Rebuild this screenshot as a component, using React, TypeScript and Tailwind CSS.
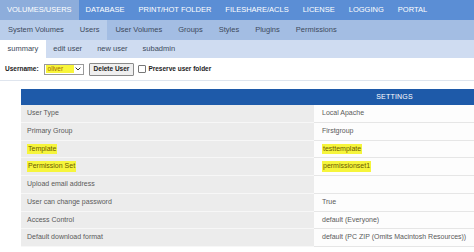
import React from "react";

const topNav = ["VOLUMES/USERS", "DATABASE", "PRINT/HOT FOLDER", "FILESHARE/ACLS", "LICENSE", "LOGGING", "PORTAL"];
const subNav = ["System Volumes", "Users", "User Volumes", "Groups", "Styles", "Plugins", "Permissions"];
const userTabs = ["summary", "edit user", "new user", "subadmin"];

const rows: { label: string; value: string; mark?: boolean }[] = [
  { label: "User Type", value: "Local Apache" },
  { label: "Primary Group", value: "Firstgroup" },
  { label: "Template", value: "testtemplate", mark: true },
  { label: "Permission Set", value: "permissionset1", mark: true },
  { label: "Upload email address", value: "" },
  { label: "User can change password", value: "True" },
  { label: "Access Control", value: "default (Everyone)" },
  { label: "Default download format", value: "default (PC ZIP (Omits Macintosh Resources))" },
];

export default function App() {
  return (
    <div className="h-[252px] w-[474px] overflow-hidden bg-white font-['Liberation_Sans',Arial,sans-serif]">
      {/* main menu */}
      <div className="flex h-[20px] items-center bg-[#5b8ed5] text-[7.5px] text-white">
        {topNav.map((item, i) => (
          <div
            key={item}
            className={`flex h-full items-center px-[7px] ${i === 0 ? "bg-[#8daddb]" : ""}`}
          >
            {item}
          </div>
        ))}
      </div>

      {/* section tabs */}
      <div className="flex h-[20px] items-center bg-[#a3bde3] text-[7.5px] text-[#3d4a5c]">
        {subNav.map((item, i) => (
          <div
            key={item}
            className={`flex h-full items-center px-[8px] ${i < 2 ? "bg-[#b9cdea]" : ""}`}
          >
            {item}
          </div>
        ))}
      </div>

      {/* user tabs */}
      <div className="flex h-[18px] items-center bg-[#cfdcf1] text-[7.5px] text-[#3d4a5c]">
        {userTabs.map((item, i) => (
          <div
            key={item}
            className={`flex h-full items-center px-[7.5px] ${i === 0 ? "bg-white" : ""}`}
          >
            {item}
          </div>
        ))}
      </div>

      {/* toolbar */}
      <div className="flex h-[23px] items-center border-b border-[#dfe5ee] pl-[5px] text-[6.5px] font-bold text-[#222]">
        <span>Username:</span>
        <div className="ml-[5px] flex h-[11px] w-[40px] items-center border border-[#9a9a9a] bg-white">
          <span className="ml-[1px] flex h-[8px] w-[28px] items-center bg-[#f8f53a] pl-[2px] font-normal text-[#a06a00]">
            oliver
          </span>
          <svg className="ml-auto mr-[2px]" width="6" height="4" viewBox="0 0 6 4">
            <path d="M0.6 0.6 L3 3 L5.4 0.6" fill="none" stroke="#333" strokeWidth="1" />
          </svg>
        </div>
        <div className="ml-[5px] flex h-[13px] items-center rounded-[1px] border border-[#8a8a8a] bg-[#efefef] px-[4px]">
          Delete User
        </div>
        <div className="ml-[4px] h-[8px] w-[8px] rounded-[1px] border border-[#777] bg-white" />
        <span className="ml-[2px]">Preserve user folder</span>
      </div>

      {/* settings table */}
      <div className="ml-[21px] mt-[8px] w-[460px] text-[7px] text-[#5a5a5a]">
        <div className="grid h-[16px] grid-cols-[293px_1fr] bg-[#1e5aa9] text-white">
          <div />
          <div className="flex items-center justify-center pr-[6px] tracking-[0.2px]">SETTINGS</div>
        </div>
        {rows.map((row) => (
          <div key={row.label} className="grid h-[17.75px] grid-cols-[293px_1fr]">
            <div className="flex items-center border-b border-[#f7f7f7] bg-[#ececec] pl-[6px]">
              <span className={row.mark ? "bg-[#f6f53c] px-[1px] text-[#6a5a00]" : ""}>{row.label}</span>
            </div>
            <div className="flex items-center border-b border-[#e6e6e6] bg-[#fdfdfd] pl-[8px]">
              <span className={row.mark ? "bg-[#f6f53c] px-[1px] text-[#6a5a00]" : ""}>{row.value}</span>
            </div>
          </div>
        ))}
      </div>
    </div>
  );
}
